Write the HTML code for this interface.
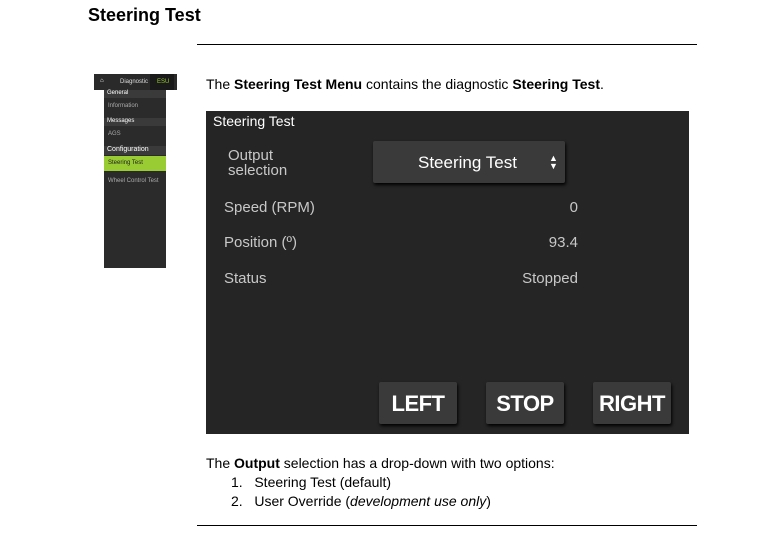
<!DOCTYPE html>
<html><head><meta charset="utf-8"><style>
body{margin:0;width:780px;height:548px;background:#fff;position:relative;font-family:"Liberation Sans",sans-serif;overflow:hidden}
.a{position:absolute}
.t{font-family:"Liberation Sans",sans-serif;color:#000;font-size:14px}
.panel{left:206px;top:111px;width:483px;height:323px;background:#252525}
.g{color:#c8c8c8;font-size:15px}
.r{right:202px;text-align:right}
.btn{background:#3a3a3a;border-radius:2px;box-shadow:1px 2px 3px #000;color:#fff;font-weight:bold;font-size:22px;text-align:center;line-height:44px;width:78px;height:42px;top:382px;letter-spacing:-0.5px}
.sb{font-size:6px;color:#ddd}
</style></head><body>
<div class="a t" style="left:88px;top:5px;font-size:18px;font-weight:bold">Steering Test</div>
<div class="a" style="left:197px;top:44px;width:500px;height:1px;background:#000"></div>
<div class="a" style="left:197px;top:525px;width:500px;height:1px;background:#000"></div>

<div class="a" style="left:94px;top:74px;width:83px;height:16px;background:#2a2a2a"></div>
<div class="a sb" style="left:100px;top:78px;color:#fff">⌂</div>
<div class="a sb" style="left:120px;top:79px">Diagnostic</div>
<div class="a" style="left:150px;top:74px;width:24px;height:16px;background:#1a1a1a"></div>
<div class="a sb" style="left:157px;top:79px;color:#9c3">ESU</div>
<div class="a" style="left:104px;top:90px;width:62px;height:178px;background:#2b2b2b"></div>
<div class="a" style="left:104px;top:90px;width:62px;height:8px;background:#3a3a3a"></div>
<div class="a sb" style="left:107px;top:90px;color:#fff">General</div>
<div class="a sb" style="left:108px;top:103px;color:#aaa">Information</div>
<div class="a" style="left:104px;top:118px;width:62px;height:8px;background:#3a3a3a"></div>
<div class="a sb" style="left:107px;top:118px;color:#fff">Messages</div>
<div class="a sb" style="left:108px;top:131px;color:#aaa">AGS</div>
<div class="a" style="left:104px;top:146px;width:62px;height:9px;background:#3a3a3a"></div>
<div class="a sb" style="left:107px;top:146px;color:#fff;font-size:7px">Configuration</div>
<div class="a" style="left:104px;top:156px;width:62px;height:15px;background:#9c3"></div>
<div class="a sb" style="left:108px;top:160px;color:#222">Steering Test</div>
<div class="a sb" style="left:108px;top:178px;color:#aaa">Wheel Control Test</div>

<div class="a t" style="left:206px;top:76px">The <b>Steering Test Menu</b> contains the diagnostic <b>Steering Test</b>.</div>

<div class="a panel"></div>
<div class="a" style="left:213px;top:113px;color:#fff;font-size:14px">Steering Test</div>
<div class="a g" style="left:228px;top:148px;line-height:15px">Output<br>selection</div>
<div class="a" style="left:373px;top:141px;width:192px;height:42px;background:#3a3a3a;box-shadow:1px 2px 3px #000;border-radius:2px"></div>
<div class="a" style="left:418px;top:153px;color:#fff;font-size:17px">Steering Test</div>
<div class="a" style="left:549px;top:154px;color:#fff;font-size:9px;line-height:8px">▲<br>▼</div>
<div class="a g" style="left:224px;top:199px">Speed (RPM)</div>
<div class="a g r" style="top:199px">0</div>
<div class="a g" style="left:224px;top:234px">Position (º)</div>
<div class="a g r" style="top:234px">93.4</div>
<div class="a g" style="left:224px;top:270px">Status</div>
<div class="a g r" style="top:270px">Stopped</div>
<div class="a btn" style="left:379px">LEFT</div>
<div class="a btn" style="left:486px">STOP</div>
<div class="a btn" style="left:593px">RIGHT</div>

<div class="a t" style="left:206px;top:455px">The <b>Output</b> selection has a drop-down with two options:</div>
<div class="a t" style="left:231px;top:474px">1.&nbsp;&nbsp; Steering Test (default)</div>
<div class="a t" style="left:231px;top:493px">2.&nbsp;&nbsp; User Override (<i>development use only</i>)</div>
</body></html>
